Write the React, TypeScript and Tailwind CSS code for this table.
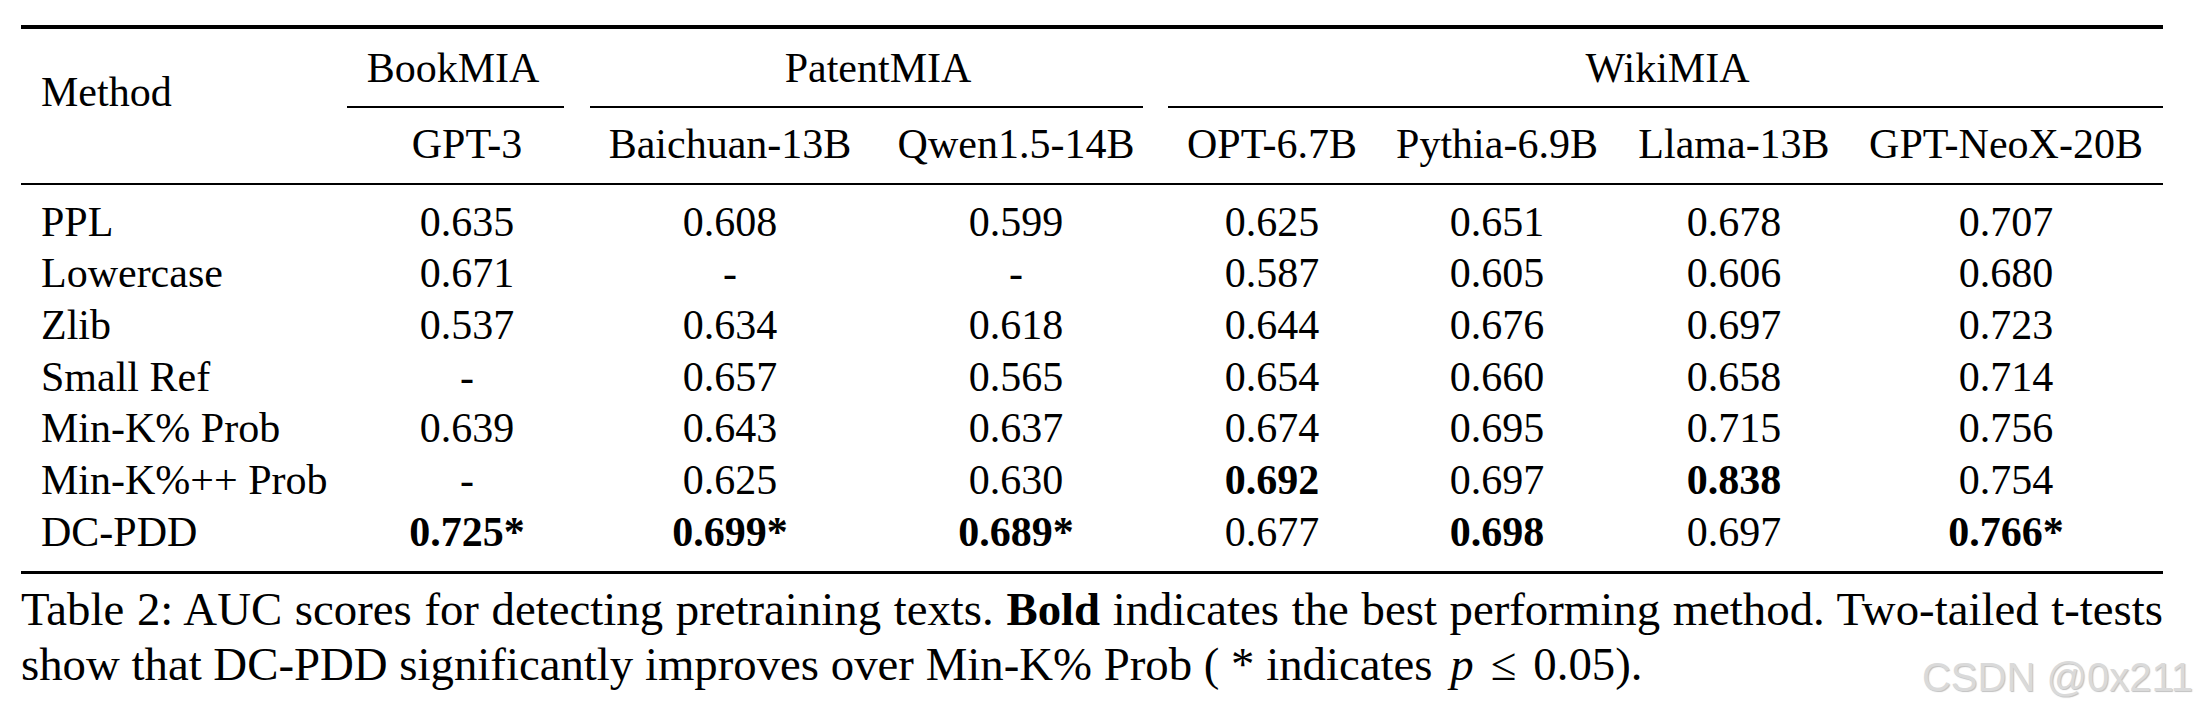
import React from 'react';

// column grid shared by header and body (table spans x 21..2163)
const cols = 'grid grid-cols-[327px_238px_288px_284px_228px_222px_252px_303px]';

const models = ['GPT-3', 'Baichuan-13B', 'Qwen1.5-14B', 'OPT-6.7B', 'Pythia-6.9B', 'Llama-13B', 'GPT-NeoX-20B'];

// "!" prefix marks a bold (best) score
const rows: [string, string[]][] = [
  ['PPL', ['0.635', '0.608', '0.599', '0.625', '0.651', '0.678', '0.707']],
  ['Lowercase', ['0.671', '-', '-', '0.587', '0.605', '0.606', '0.680']],
  ['Zlib', ['0.537', '0.634', '0.618', '0.644', '0.676', '0.697', '0.723']],
  ['Small Ref', ['-', '0.657', '0.565', '0.654', '0.660', '0.658', '0.714']],
  ['Min-K% Prob', ['0.639', '0.643', '0.637', '0.674', '0.695', '0.715', '0.756']],
  ['Min-K%++ Prob', ['-', '0.625', '0.630', '!0.692', '0.697', '!0.838', '0.754']],
  ['DC-PDD', ['!0.725*', '!0.699*', '!0.689*', '0.677', '!0.698', '0.697', '!0.766*']],
];

function Score({ value, last }: { value: string; last: boolean }) {
  const bold = value.startsWith('!');
  return (
    <div className={`text-center ${bold ? 'font-bold' : ''} ${last ? 'pr-[11px]' : ''}`}>
      {bold ? value.slice(1) : value}
    </div>
  );
}

export default function App() {
  return (
    <div className="relative w-[2202px] h-[716px] bg-white text-black font-['Liberation_Serif',serif] pl-[21px] pr-[39px] pt-[25px]">
      {/* top rule */}
      <div className="h-[4px] bg-black" />

      {/* header */}
      <div className={`${cols} text-[42px] leading-[52px]`}>
        <div className="row-span-2 pl-[20px] pt-[37px]">Method</div>

        <div className="pt-[13px]">
          <div className="text-center pr-[28px]">BookMIA</div>
          <div className="mt-[12px] h-[2px] bg-black -ml-[1px] mr-[22px]" />
        </div>
        <div className="col-span-2 pt-[13px]">
          <div className="text-center pl-[12px]">PatentMIA</div>
          <div className="mt-[12px] h-[2px] bg-black ml-[4px] mr-[15px]" />
        </div>
        <div className="col-span-4 pt-[13px]">
          <div className="text-center pl-[14px]">WikiMIA</div>
          <div className="mt-[12px] h-[2px] bg-black ml-[10px]" />
        </div>

        {models.map((m, i) => (
          <div key={m} className={`pt-[10px] pb-[13px] text-center ${i === models.length - 1 ? 'pr-[11px]' : ''}`}>
            {m}
          </div>
        ))}
      </div>

      {/* mid rule */}
      <div className="h-[2px] bg-black" />

      {/* body */}
      <div className="pt-[11.5px] text-[42px] leading-[51.7px]">
        {rows.map(([method, scores]) => (
          <div key={method} className={cols}>
            <div className="pl-[20px]">{method}</div>
            {scores.map((s, i) => (
              <Score key={i} value={s} last={i === scores.length - 1} />
            ))}
          </div>
        ))}
      </div>

      {/* bottom rule */}
      <div className="mt-[12.6px] h-[3px] bg-black" />

      {/* caption */}
      <div className="mt-[7.7px] text-[46.8px] leading-[55px]">
        <div className="whitespace-nowrap text-justify [text-align-last:justify]">
          Table 2: AUC scores for detecting pretraining texts. <span className="font-bold">Bold</span> indicates the best
          performing method. Two-tailed t-tests
        </div>
        <div className="whitespace-nowrap">
          show that DC-PDD significantly improves over Min-K% Prob ( * indicates{' '}
          <span className="italic ml-[6px]">p</span>
          <span className="px-[17px]">≤</span>0.05).
        </div>
      </div>

      {/* watermark */}
      <div className="absolute right-[9px] top-[657px] text-[40px] leading-[40px] font-['Liberation_Sans',sans-serif] text-[#dadada] [text-shadow:1px_1px_1px_rgba(0,0,0,0.25)]">
        CSDN @0x211
      </div>
    </div>
  );
}
